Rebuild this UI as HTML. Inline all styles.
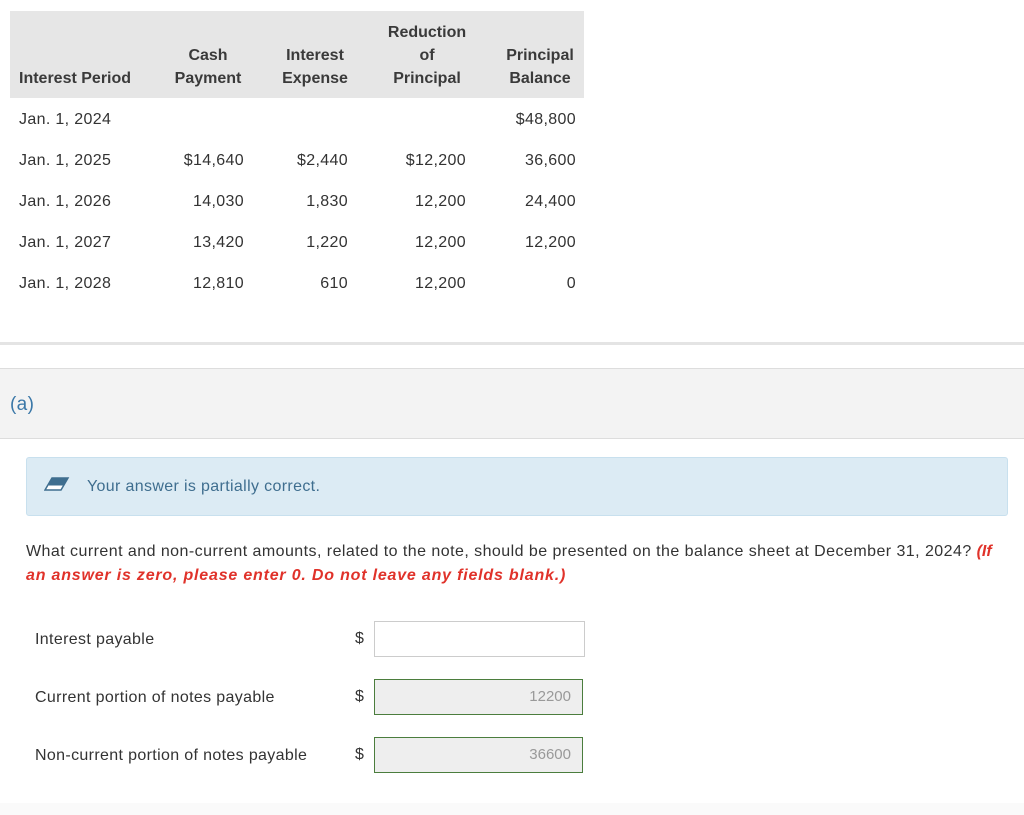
<!DOCTYPE html>
<html><head><meta charset="utf-8"><style>
*{margin:0;padding:0;box-sizing:border-box}
body{width:1024px;height:815px;position:relative;background:#fff;font-family:"Liberation Sans",sans-serif;color:#333;font-size:16px;letter-spacing:0.35px;overflow:hidden}
.a{position:absolute;white-space:nowrap}
.r{text-align:right}
.c{text-align:center}
.hd{font-weight:bold;color:#3a3a3a;font-size:16px;line-height:23px;letter-spacing:0}
</style></head><body>
<div class="a" style="left:10px;top:11px;width:574px;height:87px;background:#e6e6e6"></div>
<div class="a hd" style="left:19px;top:67px">Interest Period</div>
<div class="a hd c" style="left:163px;top:44px;width:90px">Cash<br>Payment</div>
<div class="a hd c" style="left:270px;top:44px;width:90px">Interest<br>Expense</div>
<div class="a hd c" style="left:382px;top:21px;width:90px">Reduction<br>of<br>Principal</div>
<div class="a hd c" style="left:495px;top:44px;width:90px">Principal<br>Balance</div>

<div class="a" style="left:19px;top:111px">Jan. 1, 2024</div>
<div class="a r" style="left:456px;top:111px;width:120px">$48,800</div>

<div class="a" style="left:19px;top:152px">Jan. 1, 2025</div>
<div class="a r" style="left:124px;top:152px;width:120px">$14,640</div>
<div class="a r" style="left:228px;top:152px;width:120px">$2,440</div>
<div class="a r" style="left:346px;top:152px;width:120px">$12,200</div>
<div class="a r" style="left:456px;top:152px;width:120px">36,600</div>

<div class="a" style="left:19px;top:193px">Jan. 1, 2026</div>
<div class="a r" style="left:124px;top:193px;width:120px">14,030</div>
<div class="a r" style="left:228px;top:193px;width:120px">1,830</div>
<div class="a r" style="left:346px;top:193px;width:120px">12,200</div>
<div class="a r" style="left:456px;top:193px;width:120px">24,400</div>

<div class="a" style="left:19px;top:234px">Jan. 1, 2027</div>
<div class="a r" style="left:124px;top:234px;width:120px">13,420</div>
<div class="a r" style="left:228px;top:234px;width:120px">1,220</div>
<div class="a r" style="left:346px;top:234px;width:120px">12,200</div>
<div class="a r" style="left:456px;top:234px;width:120px">12,200</div>

<div class="a" style="left:19px;top:275px">Jan. 1, 2028</div>
<div class="a r" style="left:124px;top:275px;width:120px">12,810</div>
<div class="a r" style="left:228px;top:275px;width:120px">610</div>
<div class="a r" style="left:346px;top:275px;width:120px">12,200</div>
<div class="a r" style="left:456px;top:275px;width:120px">0</div>

<div class="a" style="left:0;top:342px;width:1024px;height:3px;background:#e4e4e4"></div>
<div class="a" style="left:0;top:368px;width:1024px;height:71px;background:#f3f3f3;border-top:1px solid #ddd;border-bottom:1px solid #ddd"></div>
<div class="a" style="left:10px;top:394px;font-size:19px;color:#3b78a8">(a)</div>

<div class="a" style="left:26px;top:457px;width:982px;height:59px;background:#dcebf4;border:1px solid #c8e0ee;border-radius:3px"></div>
<svg class="a" style="left:44px;top:476px" width="26" height="18" viewBox="0 0 26 18"><path d="M8 2 L24 2 L17 14 L1 14 Z" fill="#fff" stroke="#3f6e8f" stroke-width="1.5"/><path d="M8 2 L24 2 L19.5 9.5 L4.5 9.5 Z" fill="#3f6e8f"/></svg>
<div class="a" style="left:87px;top:478px;color:#3f6e8f">Your answer is partially correct.</div>

<div class="a" style="left:26px;top:543px;letter-spacing:0.45px;color:#333">What current and non-current amounts, related to the note, should be presented on the balance sheet at December 31, 2024? <i style="color:#e0322a;font-weight:bold;letter-spacing:0">(If</i></div>
<div class="a" style="left:26px;top:567px;color:#e0322a;font-weight:bold;font-style:italic;letter-spacing:0.8px">an answer is zero, please enter 0. Do not leave any fields blank.)</div>

<div class="a" style="left:35px;top:631px">Interest payable</div>
<div class="a" style="left:35px;top:689px">Current portion of notes payable</div>
<div class="a" style="left:35px;top:747px">Non-current portion of notes payable</div>
<div class="a" style="left:355px;top:630px">$</div>
<div class="a" style="left:355px;top:688px">$</div>
<div class="a" style="left:355px;top:746px">$</div>
<div class="a" style="left:374px;top:621px;width:211px;height:36px;border:1px solid #ccc;background:#fff"></div>
<div class="a r" style="left:374px;top:679px;width:209px;height:36px;border:1px solid #4b7d3d;background:#eee;color:#999;font-size:15px;line-height:34px;padding-right:11px;letter-spacing:0">12200</div>
<div class="a r" style="left:374px;top:737px;width:209px;height:36px;border:1px solid #4b7d3d;background:#eee;color:#999;font-size:15px;line-height:34px;padding-right:11px;letter-spacing:0">36600</div>
<div class="a" style="left:0;top:803px;width:1024px;height:12px;background:#fafafa"></div>
</body></html>
